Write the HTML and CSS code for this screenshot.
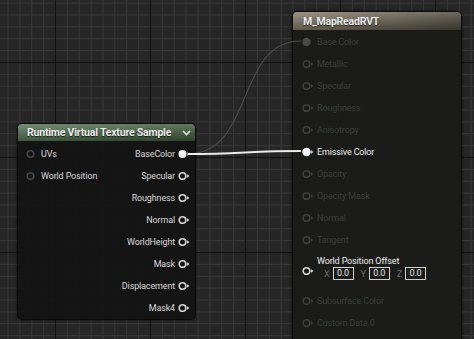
FILE: index.html
```html
<!DOCTYPE html>
<html lang="en">
<head>
    <meta charset="UTF-8">
    <title>M_MapReadRVT</title>
    <link rel="stylesheet" href="styles.css">
</head>
<body>

    <div class="graph">

        <!-- 노드: Runtime Virtual Texture Sample -->
        <div class="node node-rvt">
            <div class="node-header">
                <span class="node-title">Runtime Virtual Texture Sample</span>
                <svg class="chevron" width="9" height="6" viewBox="0 0 9 6"><path d="M1 1 L4.5 4.5 L8 1" fill="none" stroke="#e6e6e6" stroke-width="1.6"/></svg>
            </div>
            <div class="node-body">
                <div class="pins-in">
                    <div class="pin-row">
                        <svg class="pin pin-faint" width="12" height="10" viewBox="0 0 12 10"><circle cx="4.5" cy="5" r="3.3"/></svg>
                        <span>UVs</span>
                    </div>
                    <div class="pin-row">
                        <svg class="pin pin-faint" width="12" height="10" viewBox="0 0 12 10"><circle cx="4.5" cy="5" r="3.3"/></svg>
                        <span>World Position</span>
                    </div>
                </div>
                <div class="pins-out">
                    <div class="pin-row"><span>BaseColor</span><svg class="pin pin-linked" width="12" height="10" viewBox="0 0 12 10"><circle cx="4.5" cy="5" r="4"/><path d="M9 3.2 L11.5 5 L9 6.8 Z"/></svg></div>
                    <div class="pin-row"><span>Specular</span><svg class="pin" width="12" height="10" viewBox="0 0 12 10"><circle cx="4.5" cy="5" r="3.3"/><path d="M9 3.2 L11.5 5 L9 6.8 Z"/></svg></div>
                    <div class="pin-row"><span>Roughness</span><svg class="pin" width="12" height="10" viewBox="0 0 12 10"><circle cx="4.5" cy="5" r="3.3"/><path d="M9 3.2 L11.5 5 L9 6.8 Z"/></svg></div>
                    <div class="pin-row"><span>Normal</span><svg class="pin" width="12" height="10" viewBox="0 0 12 10"><circle cx="4.5" cy="5" r="3.3"/><path d="M9 3.2 L11.5 5 L9 6.8 Z"/></svg></div>
                    <div class="pin-row"><span>WorldHeight</span><svg class="pin" width="12" height="10" viewBox="0 0 12 10"><circle cx="4.5" cy="5" r="3.3"/><path d="M9 3.2 L11.5 5 L9 6.8 Z"/></svg></div>
                    <div class="pin-row"><span>Mask</span><svg class="pin" width="12" height="10" viewBox="0 0 12 10"><circle cx="4.5" cy="5" r="3.3"/><path d="M9 3.2 L11.5 5 L9 6.8 Z"/></svg></div>
                    <div class="pin-row"><span>Displacement</span><svg class="pin" width="12" height="10" viewBox="0 0 12 10"><circle cx="4.5" cy="5" r="3.3"/><path d="M9 3.2 L11.5 5 L9 6.8 Z"/></svg></div>
                    <div class="pin-row"><span>Mask4</span><svg class="pin" width="12" height="10" viewBox="0 0 12 10"><circle cx="4.5" cy="5" r="3.3"/><path d="M9 3.2 L11.5 5 L9 6.8 Z"/></svg></div>
                </div>
            </div>
        </div>

        <!-- 노드: 머티리얼 결과 -->
        <div class="node node-material">
            <div class="node-header">
                <span class="node-title">M_MapReadRVT</span>
            </div>
            <div class="node-body">
                <div class="pin-row dim"><svg class="pin pin-grey" width="12" height="10" viewBox="0 0 12 10"><circle cx="4.5" cy="5" r="4.2"/></svg><span>Base Color</span></div>
                <div class="pin-row dim"><svg class="pin" width="12" height="10" viewBox="0 0 12 10"><circle cx="4.5" cy="5" r="3.3"/><path d="M9 3.2 L11.5 5 L9 6.8 Z"/></svg><span>Metallic</span></div>
                <div class="pin-row dim"><svg class="pin" width="12" height="10" viewBox="0 0 12 10"><circle cx="4.5" cy="5" r="3.3"/><path d="M9 3.2 L11.5 5 L9 6.8 Z"/></svg><span>Specular</span></div>
                <div class="pin-row dim"><svg class="pin" width="12" height="10" viewBox="0 0 12 10"><circle cx="4.5" cy="5" r="3.3"/><path d="M9 3.2 L11.5 5 L9 6.8 Z"/></svg><span>Roughness</span></div>
                <div class="pin-row dim"><svg class="pin" width="12" height="10" viewBox="0 0 12 10"><circle cx="4.5" cy="5" r="3.3"/><path d="M9 3.2 L11.5 5 L9 6.8 Z"/></svg><span>Anisotropy</span></div>
                <div class="pin-row"><svg class="pin pin-linked" width="12" height="10" viewBox="0 0 12 10"><circle cx="4.5" cy="5" r="4.2"/><path d="M9 3.2 L11.5 5 L9 6.8 Z"/></svg><span>Emissive Color</span></div>
                <div class="pin-row dim"><svg class="pin" width="12" height="10" viewBox="0 0 12 10"><circle cx="4.5" cy="5" r="3.3"/><path d="M9 3.2 L11.5 5 L9 6.8 Z"/></svg><span>Opacity</span></div>
                <div class="pin-row dim"><svg class="pin" width="12" height="10" viewBox="0 0 12 10"><circle cx="4.5" cy="5" r="3.3"/><path d="M9 3.2 L11.5 5 L9 6.8 Z"/></svg><span>Opacity Mask</span></div>
                <div class="pin-row dim"><svg class="pin" width="12" height="10" viewBox="0 0 12 10"><circle cx="4.5" cy="5" r="3.3"/><path d="M9 3.2 L11.5 5 L9 6.8 Z"/></svg><span>Normal</span></div>
                <div class="pin-row dim"><svg class="pin" width="12" height="10" viewBox="0 0 12 10"><circle cx="4.5" cy="5" r="3.3"/><path d="M9 3.2 L11.5 5 L9 6.8 Z"/></svg><span>Tangent</span></div>
                <div class="pin-row pin-row-tall">
                    <svg class="pin" width="12" height="10" viewBox="0 0 12 10"><circle cx="4.5" cy="5" r="3.3"/><path d="M9 3.2 L11.5 5 L9 6.8 Z"/></svg>
                    <div class="wpo">
                        <span>World Position Offset</span>
                        <div class="vec">
                            <span class="axis">X</span><span class="field">0.0</span>
                            <span class="axis">Y</span><span class="field">0.0</span>
                            <span class="axis">Z</span><span class="field">0.0</span>
                        </div>
                    </div>
                </div>
                <div class="pin-row dim"><svg class="pin" width="12" height="10" viewBox="0 0 12 10"><circle cx="4.5" cy="5" r="3.3"/><path d="M9 3.2 L11.5 5 L9 6.8 Z"/></svg><span>Subsurface Color</span></div>
                <div class="pin-row dim"><svg class="pin" width="12" height="10" viewBox="0 0 12 10"><circle cx="4.5" cy="5" r="3.3"/><path d="M9 3.2 L11.5 5 L9 6.8 Z"/></svg><span>Custom Data 0</span></div>
            </div>
        </div>

        <!-- 연결선 -->
        <svg class="wires" width="474" height="339" viewBox="0 0 474 339">
            <path d="M187 154 C255 154 235 41 301 41" fill="none" stroke="#4a4a4a" stroke-width="1.2"/>
            <path d="M188 154 C240 154 250 151 301 151" fill="none" stroke="#ececec" stroke-width="2"/>
        </svg>
    </div>

</body>
</html>
```

FILE: styles.css
```css
/* 기본 스타일링 */
body {
    margin: 0;
    padding: 0;
    background-color: #262626;
    font-family: Roboto, "Liberation Sans", sans-serif;
    overflow: hidden;
}

/* 그래프 배경: 작은 격자 + 큰 격자 */
.graph {
    position: relative;
    width: 474px;
    height: 339px;
    overflow: hidden;
    background-color: #262626;
    background-image:
        linear-gradient(to right, #111 1px, transparent 1px),
        linear-gradient(to bottom, #111 1px, transparent 1px),
        linear-gradient(to right, #383838 1px, transparent 1px),
        linear-gradient(to bottom, #383838 1px, transparent 1px);
    background-size: 95px 95px, 95px 95px, 11.875px 11.875px, 11.875px 11.875px;
    background-position: 55px 0, 0 62px, 55px 0, 0 62px;
}

.wires {
    position: absolute;
    left: 0;
    top: 0;
    pointer-events: none;
}

/* 노드 공통 */
.node {
    position: absolute;
    border: 1px solid #0b0b0b;
    border-radius: 5px;
    box-shadow: 0 0 3px rgba(0, 0, 0, 0.6);
    overflow: hidden;
}

.node-header {
    display: flex;
    align-items: center;
    justify-content: space-between;
    height: 17px;
    padding: 0 4px 0 9px;
}

.node-title {
    color: #ededed;
    font-size: 10.5px;
    font-weight: bold;
    letter-spacing: -0.2px;
    text-shadow: 0 1px 1px rgba(0, 0, 0, 0.7);
}

.pin-row {
    display: flex;
    align-items: center;
    height: 22px;
    gap: 3px;
    color: #d8d8d8;
    font-size: 9px;
    letter-spacing: -0.15px;
}

.pin {
    flex: none;
    fill: none;
    stroke: #d8d8d8;
    stroke-width: 1.6;
}

.pin path {
    fill: #d8d8d8;
    stroke: none;
}

.pin-linked circle {
    fill: #f4f4f4;
    stroke: none;
}

.pin-faint {
    stroke: #444;
}

.pin-faint circle {
    fill: #141414;
}

/* 스타일링: 왼쪽 노드 */
.node-rvt {
    left: 17px;
    top: 123px;
    width: 177px;
    background-color: rgba(20, 20, 20, 0.96);
}

.node-rvt .node-header {
    background:
        linear-gradient(to bottom, rgba(255, 255, 255, 0.18), rgba(0, 0, 0, 0.25)),
        linear-gradient(to right, #557552, #3e573b);
}

.node-rvt .node-body {
    display: flex;
    justify-content: space-between;
    padding: 2px 5px 0 8px;
}

.pins-out .pin-row {
    justify-content: flex-end;
}

/* 스타일링: 오른쪽 노드 */
.node-material {
    left: 292px;
    top: 11px;
    width: 168px;
    height: 345px;
    background-color: rgba(27, 28, 26, 0.97);
}

.node-material .node-header {
    height: 18px;
    padding-left: 10px;
    background:
        linear-gradient(to bottom, rgba(255, 255, 255, 0.16), rgba(0, 0, 0, 0.3)),
        linear-gradient(to right, #8a806c, #6a6353 60%, #4e4a40);
}

.node-material .node-body {
    padding: 1px 0 0 9px;
}

.node-material .pin-row {
    color: #ececec;
}

.pin-row.dim {
    color: #3c3c3a;
}

.pin-row.dim .pin {
    stroke: #3e3e3c;
}

.pin-row.dim .pin path {
    fill: #3e3e3c;
}

.pin-grey circle {
    fill: #4a4a48;
    stroke: none;
}

/* World Position Offset 입력 */
.pin-row-tall {
    height: 39px;
    align-items: center;
}

.wpo {
    display: flex;
    flex-direction: column;
    gap: 1px;
    margin-top: -5px;
}

.vec {
    display: flex;
    align-items: center;
    padding-left: 7px;
}

.axis {
    color: #6a6a6a;
    font-size: 9px;
    margin-right: 3px;
}

.field {
    width: 19px;
    height: 11px;
    margin-right: 7px;
    border: 1px solid #d0d0d0;
    color: #e6e6e6;
    font-size: 9px;
    line-height: 11px;
    text-align: center;
}
```
